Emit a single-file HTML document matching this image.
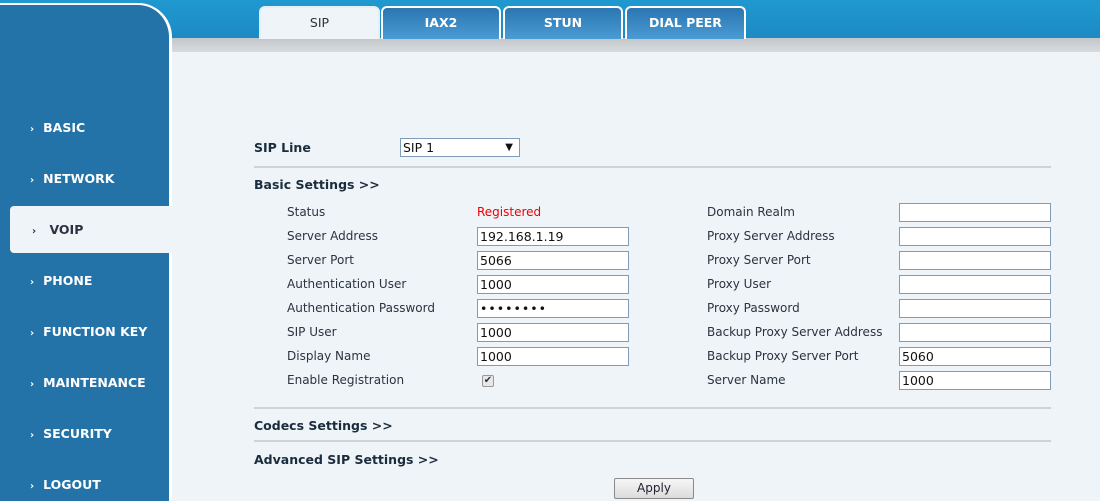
<!DOCTYPE html>
<html><head><meta charset="utf-8"><style>
*{margin:0;padding:0;box-sizing:border-box}
html,body{width:1100px;height:501px;overflow:hidden}
body{background:#eef4f7;font-family:Tahoma,"DejaVu Sans","Liberation Sans",sans-serif;font-size:12px;color:#2a3340;position:relative}
.a{position:absolute;white-space:nowrap}
#top{left:0;top:0;width:1100px;height:38px;background:linear-gradient(#1f99d0,#1d8ac4)}
#band{left:172px;top:38px;width:928px;height:14px;background:linear-gradient(#c2c6ca,#d8dbde)}
#side{left:0;top:3px;width:172px;height:498px;background:#2372a8;border-top:2px solid #fff;border-right:3px solid #fff;border-top-right-radius:34px}
.tab{top:6px;height:33px;border:2px solid #fff;border-bottom:none;border-radius:6px 6px 0 0;background:linear-gradient(#2a76b0,#4b9bd4);color:#fff;font-weight:bold;text-align:center;line-height:29px;font-size:12.5px}
.tab.on{background:#eef4f7;color:#333;font-weight:normal;border-color:#e4eef4}
.m{left:30px;color:#fff;font-weight:bold;font-size:12.5px}
.m b{font-size:10px;margin-right:9px}
#act{left:10px;top:206px;width:162px;height:47px;background:#eef4f7;border-radius:4px 0 0 4px}
.l{left:287px}
.r{left:707px}
.in{width:152px;height:19px;background:#fff;border:1px solid #7f9db9;padding-left:2px;line-height:17px;font-size:12.5px;color:#111}
.h{left:254px;font-weight:bold;font-size:12.5px;color:#1b2c3d}
.hr{left:254px;width:797px;height:2px;background:#cfd2d4}
</style></head><body>
<div class="a" id="top"></div>
<div class="a" id="band"></div>
<div class="a" id="side"></div>
<div class="a" id="act"></div>
<div class="a tab on" style="left:259px;width:121px">SIP</div>
<div class="a tab" style="left:381px;width:120px">IAX2</div>
<div class="a tab" style="left:503px;width:120px">STUN</div>
<div class="a tab" style="left:625px;width:121px">DIAL PEER</div>
<div class="a m" style="top:120px"><b>›</b>BASIC</div>
<div class="a m" style="top:171px"><b>›</b>NETWORK</div>
<div class="a m" style="top:222px;color:#2a3340;left:32px"><b>›</b> VOIP</div>
<div class="a m" style="top:273px"><b>›</b>PHONE</div>
<div class="a m" style="top:324px"><b>›</b>FUNCTION KEY</div>
<div class="a m" style="top:375px"><b>›</b>MAINTENANCE</div>
<div class="a m" style="top:426px"><b>›</b>SECURITY</div>
<div class="a m" style="top:477px"><b>›</b>LOGOUT</div>
<div class="a h" style="top:140px">SIP Line</div>
<div class="a in" style="left:400px;top:138px;width:120px;height:19px">SIP 1<span style="position:absolute;right:6px;font-size:10px">▼</span></div>
<div class="a hr" style="top:166px"></div>
<div class="a h" style="top:177px">Basic Settings &gt;&gt;</div>
<div class="a l" style="top:205px">Status</div><div class="a" style="left:477px;top:205px;color:#e00">Registered</div>
<div class="a l" style="top:229px">Server Address</div><div class="a in" style="left:477px;top:227px">192.168.1.19</div>
<div class="a l" style="top:253px">Server Port</div><div class="a in" style="left:477px;top:251px">5066</div>
<div class="a l" style="top:277px">Authentication User</div><div class="a in" style="left:477px;top:275px">1000</div>
<div class="a l" style="top:301px">Authentication Password</div><div class="a in" style="left:477px;top:299px;letter-spacing:1px">••••••••</div>
<div class="a l" style="top:325px">SIP User</div><div class="a in" style="left:477px;top:323px">1000</div>
<div class="a l" style="top:349px">Display Name</div><div class="a in" style="left:477px;top:347px">1000</div>
<div class="a l" style="top:373px">Enable Registration</div>
<div class="a" style="left:482px;top:375px;width:12px;height:12px;border:1px solid #999;border-radius:2px;background:#e8e8e8;font-size:10px;line-height:10px;text-align:center">✔</div>
<div class="a r" style="top:205px">Domain Realm</div><div class="a in" style="left:899px;top:203px"></div>
<div class="a r" style="top:229px">Proxy Server Address</div><div class="a in" style="left:899px;top:227px"></div>
<div class="a r" style="top:253px">Proxy Server Port</div><div class="a in" style="left:899px;top:251px"></div>
<div class="a r" style="top:277px">Proxy User</div><div class="a in" style="left:899px;top:275px"></div>
<div class="a r" style="top:301px">Proxy Password</div><div class="a in" style="left:899px;top:299px"></div>
<div class="a r" style="top:325px">Backup Proxy Server Address</div><div class="a in" style="left:899px;top:323px"></div>
<div class="a r" style="top:349px">Backup Proxy Server Port</div><div class="a in" style="left:899px;top:347px">5060</div>
<div class="a r" style="top:373px">Server Name</div><div class="a in" style="left:899px;top:371px">1000</div>
<div class="a hr" style="top:407px"></div>
<div class="a h" style="top:418px">Codecs Settings &gt;&gt;</div>
<div class="a hr" style="top:440px"></div>
<div class="a h" style="top:452px">Advanced SIP Settings &gt;&gt;</div>
<div class="a" style="left:614px;top:478px;width:80px;height:21px;border:1px solid #8a8a8a;border-radius:2px;background:linear-gradient(#f6f6f6,#dcdcdc);text-align:center;line-height:19px;color:#223">Apply</div>
</body></html>
